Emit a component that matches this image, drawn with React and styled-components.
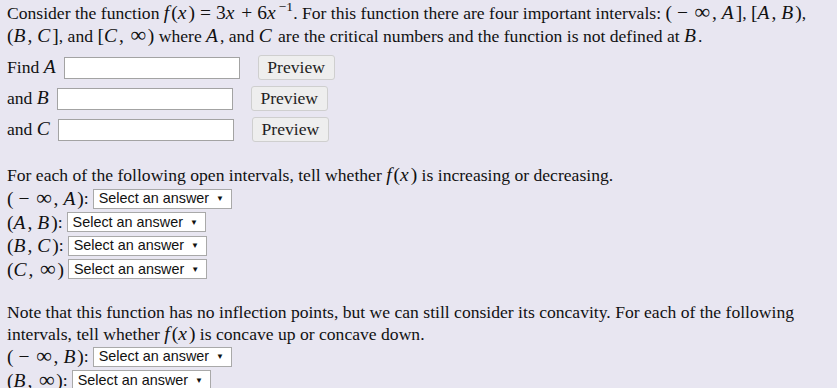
import React from "react";
import styled, { createGlobalStyle } from "styled-components";

const GlobalStyle = createGlobalStyle`
  body {
    margin: 0;
    background: #e8e6f1;
    font-family: "Liberation Serif", "Times New Roman", serif;
    font-size: 17.6px;
    color: #111;
  }
`;

const Page = styled.div`
  padding: 2px 7px 0 7px;
  line-height: 23px;
`;

const Para = styled.p`
  margin: 0;
  margin-top: ${({ gap }) => gap || 0}px;
  line-height: ${({ tight }) => (tight ? 22 : 23)}px;
`;

const M = styled.span`
  font-family: "Liberation Serif", "Times New Roman", serif;
  font-size: 19.5px;
  line-height: 1;
  white-space: nowrap;
`;

const V = styled.i`
  font-style: italic;
  margin-right: 2px;
`;

const Op = styled.span`
  margin: 0 ${({ wide }) => (wide ? 5 : 3)}px;
`;

const Inf = styled.span`
  display: inline-block;
  width: 19px;
  text-align: center;
  font-size: 22px;
  line-height: 0;
`;

const Comma = styled.span`
  margin-right: 5px;
`;

const Sup = styled.sup`
  font-size: 13.5px;
  vertical-align: 8px;
  line-height: 0;
  margin-left: 1px;
`;

const AnswerRow = styled.div`
  display: flex;
  align-items: center;
  height: 31px;
  &:first-of-type {
    margin-top: 4px;
  }
`;

const Label = styled.span`
  margin-right: 6px;
  white-space: nowrap;
`;

const TextInput = styled.input`
  box-sizing: border-box;
  width: 176px;
  height: 22px;
  border: 1px solid #a3a3a3;
  background: #fff;
  margin: 0 18px 0 0;
  padding: 0 2px;
`;

const PreviewButton = styled.button`
  box-sizing: border-box;
  width: 77px;
  height: 25px;
  border: 1px solid #cfcfcf;
  border-radius: 3px;
  background: #eeeeee;
  font-family: "Liberation Serif", "Times New Roman", serif;
  font-size: 17.6px;
  color: #222;
  padding: 0;
`;

const SelectRow = styled.div`
  display: flex;
  align-items: center;
  height: 23.5px;
`;

const Select = styled.div`
  box-sizing: border-box;
  display: inline-flex;
  align-items: center;
  height: 20px;
  margin-left: 4px;
  padding: 0 7px 0 5px;
  border: 1px solid #a9a9a9;
  background: #fff;
  font-family: "Liberation Sans", Arial, sans-serif;
  font-size: 14.4px;
  color: #111;
  white-space: nowrap;
`;

const Caret = styled.span`
  font-size: 8px;
  margin-left: 7px;
`;

const Dropdown = () => (
  <Select>
    Select an answer<Caret>▼</Caret>
  </Select>
);

const Fx = () => (
  <M>
    <V>f</V>(<V>x</V>)
  </M>
);

// interval like (A, B) or ( − ∞, A]
const Interval = ({ open = "(", close = ")", a, b }) => (
  <M>
    {open}
    {a === "-inf" ? (
      <>
        <Op wide>−</Op>
        <Inf>∞</Inf>
      </>
    ) : (
      <V>{a}</V>
    )}
    <Comma>,</Comma>
    {b === "inf" ? <Inf>∞</Inf> : <V>{b}</V>}
    {close}
  </M>
);

export default function App() {
  return (
    <>
      <GlobalStyle />
      <Page>
        <Para>
          Consider the function{" "}
          <M>
            <V>f</V>(<V>x</V>)<Op wide>=</Op>3<V>x</V>
            <Op wide>+</Op>6<V>x</V>
            <Sup>−1</Sup>
          </M>
          . For this function there are four important intervals: <Interval a="-inf" b="A" close="]" />,{" "}
          <Interval open="[" a="A" b="B" />, <Interval a="B" b="C" close="]" />, and{" "}
          <Interval open="[" a="C" b="inf" /> where <M><V>A</V></M>, and <M><V>C</V></M> are the critical numbers
          and the function is not defined at <M><V>B</V></M>.
        </Para>

        <AnswerRow>
          <Label>
            Find <M><V>A</V></M>
          </Label>
          <TextInput />
          <PreviewButton>Preview</PreviewButton>
        </AnswerRow>
        <AnswerRow>
          <Label>
            and <M><V>B</V></M>
          </Label>
          <TextInput />
          <PreviewButton>Preview</PreviewButton>
        </AnswerRow>
        <AnswerRow>
          <Label>
            and <M><V>C</V></M>
          </Label>
          <TextInput />
          <PreviewButton>Preview</PreviewButton>
        </AnswerRow>

        <Para gap={19}>
          For each of the following open intervals, tell whether <Fx /> is increasing or decreasing.
        </Para>
        <SelectRow>
          <Interval a="-inf" b="A" />:<Dropdown />
        </SelectRow>
        <SelectRow>
          <Interval a="A" b="B" />:<Dropdown />
        </SelectRow>
        <SelectRow>
          <Interval a="B" b="C" />:<Dropdown />
        </SelectRow>
        <SelectRow>
          <Interval a="C" b="inf" />
          <Dropdown />
        </SelectRow>

        <Para gap={20} tight>
          Note that this function has no inflection points, but we can still consider its concavity. For each of the following
          intervals, tell whether <Fx /> is concave up or concave down.
        </Para>
        <SelectRow>
          <Interval a="-inf" b="B" />:<Dropdown />
        </SelectRow>
        <SelectRow>
          <Interval a="B" b="inf" />:<Dropdown />
        </SelectRow>
      </Page>
    </>
  );
}
